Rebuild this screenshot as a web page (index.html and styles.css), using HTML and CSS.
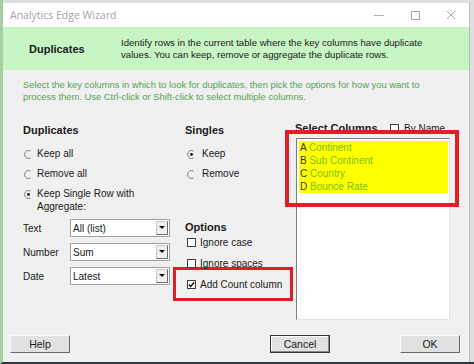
FILE: index.html
```html
<!DOCTYPE html>
<html lang="en">
<head>
  <meta charset="UTF-8">
  <title>Analytics Edge Wizard</title>
  <link rel="stylesheet" href="styles.css">
</head>
<body>
  <div class="screen">
    <div class="dialog">

      <!-- title bar -->
      <div class="titlebar">
        <span class="title">Analytics Edge Wizard</span>
        <span class="winbtn">
          <svg width="12" height="12" viewBox="0 0 12 12"><line x1="1" y1="6.5" x2="11" y2="6.5" stroke="#b0b0b0" stroke-width="1"/></svg>
        </span>
        <span class="winbtn">
          <svg width="12" height="12" viewBox="0 0 12 12"><rect x="2.5" y="2.5" width="8" height="8" fill="none" stroke="#a8a8a8" stroke-width="1"/></svg>
        </span>
        <span class="winbtn">
          <svg width="12" height="12" viewBox="0 0 12 12"><path d="M2 2 L10 10 M10 2 L2 10" stroke="#a8a8a8" stroke-width="1"/></svg>
        </span>
      </div>

      <!-- green header -->
      <div class="header">
        <div class="header-title">Duplicates</div>
        <div class="header-desc">Identify rows in the current table where the key columns have duplicate<br>values. You can keep, remove or aggregate the duplicate rows.</div>
      </div>

      <div class="body">
        <p class="hint">Select the key columns in which to look for duplicates, then pick the options for how you want to<br>process them. Use Ctrl-click or Shift-click to select multiple columns.</p>

        <div class="main">

          <!-- duplicates -->
          <div class="col col-dup">
            <div class="heading">Duplicates</div>
            <div class="radios">
              <div class="radio">
                <svg class="rb" width="9" height="9" viewBox="0 0 9 9"><path d="M6.5 1 A4 4 0 1 0 6.5 8" fill="none" stroke="#7a7a7a"/></svg>
                <span>Keep all</span>
              </div>
              <div class="radio">
                <svg class="rb" width="9" height="9" viewBox="0 0 9 9"><path d="M6.5 1 A4 4 0 1 0 6.5 8" fill="none" stroke="#7a7a7a"/></svg>
                <span>Remove all</span>
              </div>
              <div class="radio">
                <svg class="rb" width="9" height="9" viewBox="0 0 9 9"><path d="M6.5 1 A4 4 0 1 0 6.5 8" fill="none" stroke="#7a7a7a"/><circle cx="4.5" cy="4.5" r="1.4" fill="#111"/></svg>
                <span>Keep Single Row with<br>Aggregate:</span>
              </div>
            </div>
            <div class="agg">
              <div class="agg-row">
                <span class="agg-label">Text</span>
                <div class="select"><span>All (list)</span><span class="arrow"></span></div>
              </div>
              <div class="agg-row">
                <span class="agg-label">Number</span>
                <div class="select"><span>Sum</span><span class="arrow"></span></div>
              </div>
              <div class="agg-row">
                <span class="agg-label">Date</span>
                <div class="select"><span>Latest</span><span class="arrow"></span></div>
              </div>
            </div>
          </div>

          <!-- singles + options -->
          <div class="col col-sing">
            <div class="heading">Singles</div>
            <div class="radios">
              <div class="radio">
                <svg class="rb" width="9" height="9" viewBox="0 0 9 9"><path d="M6.5 1 A4 4 0 1 0 6.5 8" fill="none" stroke="#7a7a7a"/><circle cx="4.5" cy="4.5" r="1.4" fill="#111"/></svg>
                <span>Keep</span>
              </div>
              <div class="radio">
                <svg class="rb" width="9" height="9" viewBox="0 0 9 9"><path d="M6.5 1 A4 4 0 1 0 6.5 8" fill="none" stroke="#7a7a7a"/></svg>
                <span>Remove</span>
              </div>
            </div>
            <div class="heading opt-heading">Options</div>
            <div class="check"><span class="cb"></span><span>Ignore case</span></div>
            <div class="check"><span class="cb"></span><span>Ignore spaces</span></div>
            <div class="check check-marked">
              <span class="cb"><svg width="7" height="7" viewBox="0 0 7 7"><path d="M0.8 3.4 L2.7 5.4 L6.2 1.2" fill="none" stroke="#111" stroke-width="1.4"/></svg></span>
              <span>Add Count column</span>
            </div>
          </div>

          <!-- select columns -->
          <div class="col col-sel">
            <div class="sel-head">
              <span class="heading">Select Columns</span>
              <span class="byname"><span class="cb"></span><span>By Name</span></span>
            </div>
            <div class="listbox">
              <div class="item"><b>A</b> Continent</div>
              <div class="item"><b>B</b> Sub Continent</div>
              <div class="item"><b>C</b> Country</div>
              <div class="item"><b>D</b> Bounce Rate</div>
            </div>
            <div class="mark"></div>
          </div>

        </div>
      </div>

      <div class="footer">
        <button class="btn">Help</button>
        <button class="btn btn-default">Cancel</button>
        <button class="btn">OK</button>
      </div>

    </div>
  </div>
</body>
</html>
```

FILE: styles.css
```css
/* page */
body {
  margin: 0;
  font-family: "Liberation Sans", Arial, sans-serif;
  font-size: 10px;
  color: #1a1a1a;
}

/* excel behind the dialog */
.screen {
  width: 474px;
  height: 364px;
  box-sizing: border-box;
  padding-top: 3px;
  border-left: 3px solid #a3cfa3;
  border-bottom: 2px solid #2e3545;
  background: #dedede;
  overflow: hidden;
}

.dialog {
  width: 466px;
  height: 359px;
  background: #f0f0f0;
  display: flex;
  flex-direction: column;
  box-shadow: 1px 0 0 #bdbdbd;
}

/* title bar */
.titlebar {
  height: 24px;
  background: #fff;
  display: flex;
  align-items: center;
  padding-left: 7px;
}
.title {
  flex: 1;
  font-family: "Open Sans", sans-serif;
  font-size: 10.5px;
  color: #a4a4a4;
}
.winbtn {
  width: 36px;
  display: flex;
  justify-content: center;
}

/* header */
.header {
  height: 43px;
  background: #c8f5c4;
  display: flex;
  align-items: center;
  padding-left: 26px;
}
.header-title {
  width: 92px;
  font-size: 11px;
  font-weight: bold;
}
.header-desc {
  font-size: 9.6px;
  line-height: 12px;
  white-space: nowrap;
}

/* body */
.body {
  flex: 1;
  padding: 9px 0 0 20px;
}
.hint {
  margin: 0;
  font-size: 9.4px;
  line-height: 12px;
  white-space: nowrap;
  color: #58a058;
}

.main {
  display: grid;
  grid-template-columns: 162px 110px 155px;
  margin-top: 20px;
}

.heading {
  font-size: 11px;
  font-weight: bold;
  line-height: 14px;
}

/* radios */
.radios {
  display: flex;
  flex-direction: column;
  gap: 7px;
  margin-top: 10px;
}
.radio {
  display: flex;
  align-items: flex-start;
  gap: 4px;
  line-height: 13px;
}
.radio .rb {
  margin-top: 3px;
  flex: none;
}
.col-dup .radio {
  padding-left: 1px;
}
.col-sing .radio {
  padding-left: 2px;
  gap: 6px;
}

/* aggregate selects */
.agg {
  display: flex;
  flex-direction: column;
  gap: 6px;
  margin-top: 6px;
}
.agg-row {
  display: flex;
  align-items: center;
}
.agg-label {
  width: 47px;
}
.select {
  width: 100px;
  height: 18px;
  box-sizing: border-box;
  background: #fff;
  border: 1px solid #a0a0a0;
  display: flex;
  align-items: center;
  justify-content: space-between;
  padding-left: 2px;
}
.arrow {
  width: 12px;
  height: 14px;
  margin-right: 1px;
  box-sizing: border-box;
  border: 1px solid #c8c8c8;
  border-right-color: #6e6e6e;
  border-bottom-color: #6e6e6e;
  background: #f0f0f0;
  position: relative;
}
.arrow::after {
  content: "";
  position: absolute;
  left: 2px;
  top: 4px;
  border-left: 3px solid transparent;
  border-right: 3px solid transparent;
  border-top: 3px solid #111;
}

/* options */
.opt-heading {
  margin-top: 40px;
}
.check {
  display: flex;
  align-items: center;
  gap: 4px;
  line-height: 13px;
  padding-left: 2px;
  margin-top: 8px;
}
.col-sing .opt-heading + .check {
  margin-top: 2px;
}
.cb {
  width: 9px;
  height: 9px;
  box-sizing: border-box;
  border: 1px solid #404040;
  background: #fff;
  display: flex;
  align-items: center;
  justify-content: center;
  flex: none;
}
.check-marked {
  margin: -3px 0 0 -12px;
  width: 120px;
  height: 34px;
  box-sizing: border-box;
  border: 3px solid #e31d25;
  padding-left: 11px;
}

/* select columns */
.col-sel {
  position: relative;
}
.sel-head {
  display: flex;
  align-items: center;
  margin-top: -2px;
}
.sel-head .heading {
  width: 95px;
}
.byname {
  display: flex;
  align-items: center;
  gap: 5px;
}
.listbox {
  margin: 3px 0 0 1px;
  height: 182px;
  box-sizing: border-box;
  background: #fff;
  border: 1px solid #e6e6e6;
  border-left-color: #7d7d7d;
  border-top-color: #7d7d7d;
  padding: 2px 1px 0 2px;
}
.item {
  background: #ffff00;
  line-height: 13px;
  color: #7cc21a;
  padding-left: 1px;
}
.item b {
  font-weight: normal;
  color: #333;
}

/* red annotation box over the list */
.mark {
  position: absolute;
  left: -10px;
  top: 7px;
  width: 174px;
  height: 77px;
  box-sizing: border-box;
  border: 4px solid #e31d25;
}

/* buttons */
.footer {
  display: flex;
  padding: 0 9px 9px 7px;
}
.btn {
  width: 60px;
  height: 18px;
  font-family: "Liberation Sans", Arial, sans-serif;
  font-size: 10.5px;
  color: #1a1a1a;
  background: #e1e1e1;
  border: 1px solid #fafafa;
  border-right-color: #6a6a6a;
  border-bottom-color: #6a6a6a;
  padding: 0;
}
.btn-default {
  margin-left: auto;
  margin-right: 70px;
  border: 1px solid #333;
  box-shadow: inset -1px -1px 0 #8a8a8a, inset 1px 1px 0 #fff;
}
```
